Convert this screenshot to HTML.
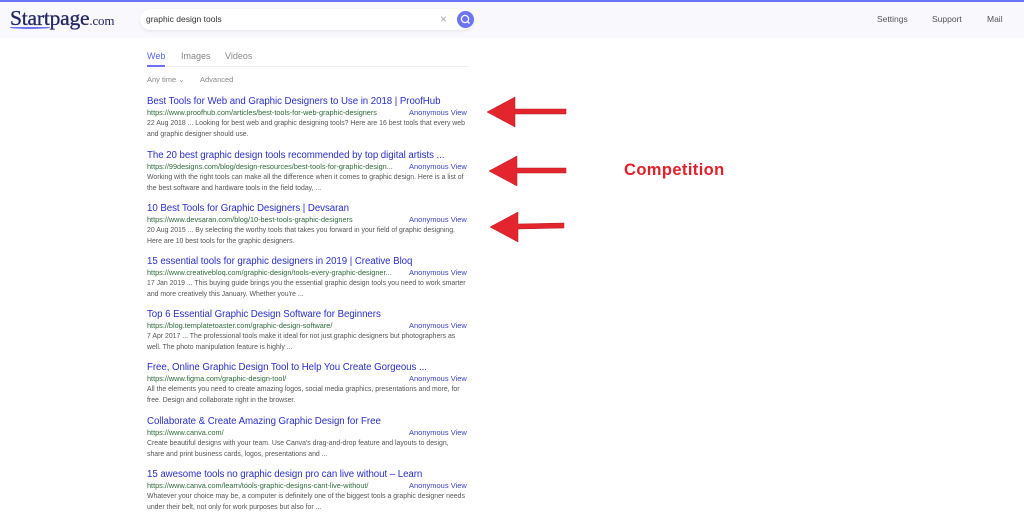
<!DOCTYPE html>
<html><head><meta charset="utf-8"><style>
*{margin:0;padding:0;box-sizing:border-box}
body{width:1024px;height:524px;background:#fff;font-family:"Liberation Sans",sans-serif;position:relative;overflow:hidden}
.top{position:absolute;left:0;top:0;width:1024px;height:2px;background:#6b74f5}
.hdr{position:absolute;left:0;top:2px;width:1024px;height:36px;background:#f8f8fd}
.logo{position:absolute;left:10px;top:6px;font-family:"Liberation Serif",serif;font-size:21.5px;color:#232863;letter-spacing:-0.2px;-webkit-text-stroke:0.3px #232863}
.logo small{font-size:13px;-webkit-text-stroke:0}
.swoosh{position:absolute;left:10px;top:26px;width:40px;height:3px;border-bottom:2px solid #6b74f5;border-radius:0 0 50% 50%}
.sb{position:absolute;left:140px;top:9px;width:334px;height:21px;background:#fff;border-radius:11px;box-shadow:0 1px 3px rgba(0,0,0,.08)}
.sb span{position:absolute;left:6px;top:5px;font-size:8.5px;color:#333}
.x{position:absolute;left:300px;top:3px;font-size:12px;color:#aaa}
.btn{position:absolute;left:457px;top:11px;width:17px;height:17px;border-radius:50%;background:#6b74f5}
.nav{position:absolute;top:14px;font-size:8.5px;color:#555}
.tabs{position:absolute;left:147px;top:51px;font-size:9px;color:#888}
.tabs span{position:absolute;white-space:nowrap}
.line{position:absolute;left:147px;top:66px;width:321px;height:1px;background:#eee}
.ul{position:absolute;left:147px;top:65px;width:18px;height:2px;background:#6b74f5}
.f{position:absolute;top:75px;font-size:7.5px;color:#888}
.r{position:absolute;left:147px;width:330px}
.t{font-size:9.7px;color:#2a2fc7;white-space:nowrap;height:12px;letter-spacing:-0.05px}
.u{font-size:7.3px;color:#2e6b3a;margin-top:0;height:10px;position:relative;white-space:nowrap}
.u b{position:absolute;left:262px;font-weight:normal;color:#3a44c4;font-size:7.5px}
.s{font-size:6.9px;color:#555;line-height:10.5px;width:320px;margin-top:1px}
.comp{position:absolute;left:624px;top:161px;font-size:16.5px;font-weight:bold;color:#e0202a;letter-spacing:0.4px}
</style></head><body>
<div class="top"></div><div class="hdr"></div>
<div class="logo">Startpage<small>.com</small></div><div class="swoosh"></div>
<div class="sb"><span>graphic design tools</span><div class="x">×</div></div>
<div class="btn"><svg width="17" height="17"><circle cx="8" cy="8" r="3.6" fill="none" stroke="#fff" stroke-width="1.3"/><path d="M10.6 10.6L12.5 12.5" stroke="#fff" stroke-width="1.3"/></svg></div>
<div class="nav" style="left:877px">Settings</div><div class="nav" style="left:932px">Support</div><div class="nav" style="left:987px">Mail</div>
<div class="tabs"><span style="left:0;color:#5a63e8">Web</span><span style="left:34px">Images</span><span style="left:78px">Videos</span></div>
<div class="line"></div><div class="ul"></div>
<div class="f" style="left:147px">Any time ⌄</div><div class="f" style="left:200px">Advanced</div>

<div class="r" style="top:96px"><div class="t">Best Tools for Web and Graphic Designers to Use in 2018 | ProofHub</div><div class="u">https://www.proofhub.com/articles/best-tools-for-web-graphic-designers<b>Anonymous View</b></div><div class="s">22 Aug 2018 ... Looking for best web and graphic designing tools? Here are 16 best tools that every web and graphic designer should use.</div></div>
<div class="r" style="top:150px"><div class="t">The 20 best graphic design tools recommended by top digital artists ...</div><div class="u">https://99designs.com/blog/design-resources/best-tools-for-graphic-design...<b>Anonymous View</b></div><div class="s">Working with the right tools can make all the difference when it comes to graphic design. Here is a list of the best software and hardware tools in the field today, ...</div></div>
<div class="r" style="top:203px"><div class="t">10 Best Tools for Graphic Designers | Devsaran</div><div class="u">https://www.devsaran.com/blog/10-best-tools-graphic-designers<b>Anonymous View</b></div><div class="s">20 Aug 2015 ... By selecting the worthy tools that takes you forward in your field of graphic designing. Here are 10 best tools for the graphic designers.</div></div>
<div class="r" style="top:256px"><div class="t">15 essential tools for graphic designers in 2019 | Creative Bloq</div><div class="u">https://www.creativebloq.com/graphic-design/tools-every-graphic-designer...<b>Anonymous View</b></div><div class="s">17 Jan 2019 ... This buying guide brings you the essential graphic design tools you need to work smarter and more creatively this January. Whether you're ...</div></div>
<div class="r" style="top:309px"><div class="t">Top 6 Essential Graphic Design Software for Beginners</div><div class="u">https://blog.templatetoaster.com/graphic-design-software/<b>Anonymous View</b></div><div class="s">7 Apr 2017 ... The professional tools make it ideal for not just graphic designers but photographers as well. The photo manipulation feature is highly ...</div></div>
<div class="r" style="top:362px"><div class="t">Free, Online Graphic Design Tool to Help You Create Gorgeous ...</div><div class="u">https://www.figma.com/graphic-design-tool/<b>Anonymous View</b></div><div class="s">All the elements you need to create amazing logos, social media graphics, presentations and more, for free. Design and collaborate right in the browser.</div></div>
<div class="r" style="top:416px"><div class="t">Collaborate &amp; Create Amazing Graphic Design for Free</div><div class="u">https://www.canva.com/<b>Anonymous View</b></div><div class="s">Create beautiful designs with your team. Use Canva's drag-and-drop feature and layouts to design, share and print business cards, logos, presentations and ...</div></div>
<div class="r" style="top:469px"><div class="t">15 awesome tools no graphic design pro can live without – Learn</div><div class="u">https://www.canva.com/learn/tools-graphic-designs-cant-live-without/<b>Anonymous View</b></div><div class="s">Whatever your choice may be, a computer is definitely one of the biggest tools a graphic designer needs under their belt, not only for work purposes but also for ...</div></div>

<svg style="position:absolute;left:0;top:0" width="1024" height="524">
<g fill="#e3262d" stroke="#b81a20" stroke-width="0.5">
<path d="M487 112 L515 97 L515 109 L566 109 L566 114 L515 114 L515 127 Z"/>
<path d="M489 171 L517 156 L517 168 L566 168 L566 173 L517 173 L517 186 Z"/>
<path d="M490 227 L518 212 L518 224 L564 223 L564 228 L518 229 L518 242 Z"/>
</g></svg>
<div class="comp">Competition</div>
</body></html>
